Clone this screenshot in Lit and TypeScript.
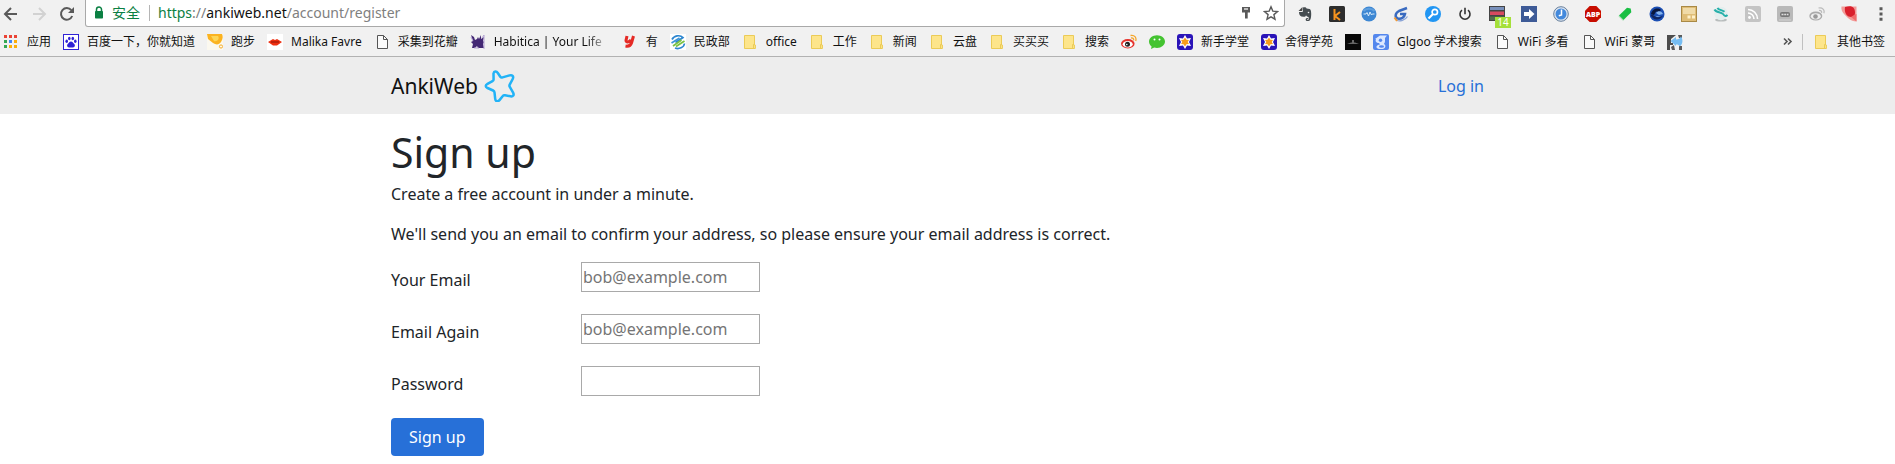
import { LitElement, html, svg, css, nothing, TemplateResult, SVGTemplateResult } from "lit";
import { customElement, property } from "lit/decorators.js";

const icons: Record<string, SVGTemplateResult> = {
  back: svg`<path d="M14 8H2.500M8 2L2 8l6 6" fill="none" stroke="#5a5a5a" stroke-width="2"/>`,
  forward: svg`<path d="M2 8h11.500M8 2l6 6-6 6" fill="none" stroke="#d2d2d2" stroke-width="2"/>`,
  reload: svg`<path d="M13.200 10A5.800 5.800 0 1 1 12.300 4.200" fill="none" stroke="#5a5a5a" stroke-width="2"/><path d="M15 1v6H9z" fill="#5a5a5a"/>`,
  lock: svg`<path d="M5.500 7V4.500a2.500 2.500 0 0 1 5 0V7" fill="none" stroke="#0b8043" stroke-width="1.500"/><rect x="4" y="6" width="8" height="7.500" rx=".8" fill="#0b8043"/>`,
  key: svg`<path d="M4 2h8v5.500H9.700V13.500H7V7.500H4z" fill="#5a5a5a"/><path d="M6 4h4" stroke="#fff" stroke-width="1.200"/>`,
  star: svg`<path d="M8 1.800l1.800 4.300 4.700.4-3.600 3.100 1.100 4.600L8 11.800l-4 2.400 1.100-4.600L1.500 6.500l4.700-.4z" fill="none" stroke="#5a5a5a" stroke-width="1.400"/>`,
  evernote: svg`<path d="M1.500 5L5.500 1v3.200L4.700 5z" fill="#444"/><path d="M2 6h3.500L6 5V1.500c2-.6 3.200 0 3.600.9l3 .6c1.100.3 1.600 2 1.600 4.800 0 4.300-.8 7.200-2.600 7.200H10c-1.400 0-1.800-2-.8-2.800l1.800-.3v1.200h-.9v.7h1.500v-2.900c-1.700-.4-2.300-.8-2.600-1.700-.3 1.300-1 1.700-2.600 1.600C3.200 10.600 2 9 2 6z" fill="#454c50"/><circle cx="11.500" cy="6.500" r=".8" fill="#eee"/>`,
  kindle: svg`<rect width="16" height="16" rx="1.500" fill="#2d2d2d"/><path d="M5.500 3v11M11 6l-5 4 5 4" fill="none" stroke="#f7931e" stroke-width="2"/>`,
  pulse: svg`<circle cx="8" cy="8" r="7.500" fill="#3d87d3"/><path d="M2.500 5a6.500 5 0 0 1 11 0" fill="none" stroke="#5f9fde" stroke-width="2"/><path d="M2.500 8h2.500l1-1.500 1.500 3.500 1.500-4 1.500 3 .8-1h2.200" fill="none" stroke="#d8eafa"/>`,
  gee: svg`<path d="M14 2L6 5C2 7 1.500 11.500 5 12.500c3.500.8 6.500-1.500 7-4.500H7" fill="none" stroke="#3a6bc0" stroke-width="2.500"/><path d="M4 14.500c3 1 8 0 10.500-4" fill="none" stroke="#8aa4d6" stroke-width="1.300"/><path d="M1.500 11.500L4 15" stroke="#f39a34" stroke-width="2"/>`,
  bluekey: svg`<circle cx="8" cy="8" r="8" fill="#2196f3"/><circle cx="9.800" cy="6" r="2.700" fill="none" stroke="#fff" stroke-width="1.700"/><path d="M8 8l-4.500 4.500" stroke="#fff" stroke-width="2.200"/>`,
  power: svg`<path d="M5 4.200a5 5 0 1 0 6 0M8 1.800v6.500" fill="none" stroke="#333" stroke-width="1.600"/>`,
  flag: svg`<path d="M0 0h16v15H0z" fill="#444"/><path d="M1 1h14v3H1z" fill="#7890bb"/><path d="M1 5.500h14V9H1z" fill="#d8495f"/><path d="M1 10.500h14V14H1z" fill="#526d4d"/>`,
  share: svg`<rect width="16" height="16" fill="#3e5b97"/><path d="M3 6h5V3l5.500 5L8 13v-3H3z" fill="#fff"/>`,
  clock: svg`<circle cx="8" cy="8" r="7.300" fill="#dce4ef" stroke="#667f9c"/><circle cx="8" cy="8" r="5.500" fill="#4389dc"/><path d="M8.500 3.500V9L5.800 9.800" fill="none" stroke="#fff" stroke-width="1.500"/>`,
  abp: svg`<path d="M4.700 0h6.600L16 4.700v6.600L11.300 16H4.700L0 11.300V4.700z" fill="#c70d00"/><text x="8" y="10.500" text-anchor="middle" font-family="Open Sans" font-size="7" font-weight="800" fill="#fff">ABP</text>`,
  tag: svg`<path d="M2 9.500L10 1.800l3.700.7.600 3.800L6.500 14z" fill="#19bf43"/><path d="M1.800 9.500L6.500 14l-.2.900-4.700-4.400z" fill="#9bdda9"/>`,
  globe: svg`<circle cx="8" cy="8" r="7.500" fill="#1c4fb4"/><path d="M2 8c1-5 7-7 10-4l-2 2-3-.4L5 9z" fill="#0a173d"/><path d="M7 7c2-3 6-2 7 1l-4 1zM5 12c3-3 6-1 8-2" fill="#86b5ee"/><path d="M1.500 9c2 5 9 7 13 0-3 3-9 3-11-1z" fill="#102560"/>`,
  drawer: svg`<rect x=".5" y=".5" width="15" height="15" fill="#dfbd76" stroke="#a98945"/><path d="M2 2h12v6H2z" fill="#f0dba8"/><rect x="6.500" y="9.500" width="3" height="3" fill="#fff1c9"/><rect x="11" y="9.500" width="3" height="3" fill="#fff1c9"/>`,
  earth: svg`<ellipse cx="8" cy="14" rx="6" ry="1.600" fill="#b9bdbd"/><circle cx="8" cy="7.500" r="6.800" fill="#e4eeee"/><path d="M1.500 3.500C3 7 8 5.500 10 8s3 2.500 4.500 1M4.500 1.800c1 2.500 5 2 7 4" fill="none" stroke="#27b0aa" stroke-width="2"/>`,
  rss: svg`<rect width="16" height="16" rx="2" fill="#c4c4c4"/><circle cx="4.500" cy="11.500" r="1.400" fill="#fff"/><path d="M3 7a6 6 0 0 1 6 6M3 3.500A9.500 9.500 0 0 1 12.500 13" fill="none" stroke="#fff" stroke-width="1.600"/>`,
  chat: svg`<rect width="16" height="16" rx="2" fill="#b9b9b9"/><rect x="3" y="6" width="10" height="5" rx="2" fill="#777"/><path d="M4.500 8.500h7" stroke="#ddd" stroke-width="1.500" stroke-dasharray="2 .7"/><path d="M2 14h12" stroke="#d4d4d4"/>`,
  weibogrey: svg`<ellipse cx="6.800" cy="10" rx="6.500" ry="4.500" fill="#aaa"/><ellipse cx="6.800" cy="10.300" rx="5" ry="3.100" fill="#eee"/><circle cx="6.500" cy="10.500" r="2.300" fill="#999"/><path d="M9.500 2c4-1 6.500 2 5.300 5.300M10 4.500c2-.4 3 .9 2.500 2.400" fill="none" stroke="#bbb" stroke-width="1.200"/>`,
  petal: svg`<path d="M.5.500h15v15C9 15 7 12 3 8 1 6 0 3 .5.500z" fill="#f39b98"/><path d="M4 1c7-2 10 0 10 6 0 3-2 4-4 4-4 0-7-4-6-10z" fill="#d9202c"/><path d="M10 11l5.500 4.500V8L13 9z" fill="#f06c6c"/>`,
  dots: svg`<path d="M6.500 1.200h3v3h-3zM6.500 6.500h3v3h-3zM6.500 11.800h3v3h-3z" fill="#5a5a5a"/>`,
  apps: svg`<path d="M1 1h3v3H1zM6 1h3v3H6zM11 1h3v3h-3z" fill="#ea4335"/><path d="M1 6h3v3H1zM1 11h3v3H1z" fill="#34a853"/><path d="M6 6h3v3H6z" fill="#4285f4"/><path d="M11 6h3v3h-3zM6 11h3v3H6zM11 11h3v3h-3z" fill="#fbae0a"/>`,
  baidu: svg`<rect x=".5" y=".5" width="15" height="15" fill="#fff" stroke="#3023d5"/><path d="M8 7.500c1.500 0 2 1.500 3 2.300 1.500 1.200 1 3.700-1 3.700H6c-2 0-2.500-2.500-1-3.700C6 9 6.500 7.500 8 7.500z" fill="#3023d5"/><g fill="#3023d5"><ellipse cx="3.700" cy="7.200" rx="1.300" ry="1.700"/><ellipse cx="6.300" cy="4.500" rx="1.300" ry="1.800"/><ellipse cx="9.800" cy="4.500" rx="1.300" ry="1.800"/><ellipse cx="12.300" cy="7.200" rx="1.300" ry="1.700"/></g>`,
  run: svg`<rect width="16" height="16" fill="#fbf8ef"/><path d="M0 0h15c1 2 1 5-1 8-2 3-5 3-8 1L1 5z" fill="#fbb321"/><path d="M4 2h7c2 3-1 6-4 5z" fill="#fdd657"/><circle cx="14" cy="12.500" r="1.600" fill="none" stroke="#f8ae28"/>`,
  lips: svg`<rect width="16" height="16" fill="#fff"/><path d="M1 8l5-3 2 1 2-1 5 3-5 3.500H6z" fill="#ee2f11"/><path d="M4 8h8" stroke="#8e170a"/>`,
  file: svg`<path d="M3.500 1.500h6L13.500 5.500v9h-10z" fill="#fafafa" stroke="#555"/><path d="M9.500 1.500v4h4" fill="none" stroke="#555"/>`,
  habitica: svg`<path d="M1 1l3 2 1 3 2-1 1-2 1 2 2-4v4l3-2-1 4 1 1-1 2 1 4H8l-1-2-2 2H2l1-4-2-2 2-1z" fill="#432874"/><path d="M1 3l2 4M12 4l2-3v14M4 14h5" fill="none" stroke="#b4a3d4"/>`,
  you: svg`<path d="M5 2L4 6.500c0 2 3 2 5-.5M11.500 2L9.500 9c-1 3-3 3.500-6 3" fill="none" stroke="#e52a25" stroke-width="3"/>`,
  civil: svg`<rect width="16" height="16" fill="#fff"/><path d="M2 5.500C4 1.500 10 .5 13 3.500L5.500 8.500" fill="none" stroke="#2d86d0" stroke-width="1.700"/><path d="M1.500 9l8-5" fill="none" stroke="#3b94d8" stroke-width="1.700"/><path d="M3 12l8.500-6M14.500 7L6 12.500" fill="none" stroke="#7ac142" stroke-width="1.700"/><path d="M5 14c4 1.500 9-.5 9.500-4.500" fill="none" stroke="#2d86d0" stroke-width="1.700"/>`,
  folder: svg`<path d="M2.500 1.500h10v9.500h.9v3.500H2.500z" fill="#fde58b" stroke="#ebcb57"/><path d="M11.500 14v-3.500h1" fill="none" stroke="#ebcb57"/>`,
  weibo: svg`<ellipse cx="6.800" cy="9.800" rx="6.800" ry="4.700" fill="#e6332d"/><ellipse cx="6.700" cy="10.200" rx="5" ry="3.200" fill="#fff"/><circle cx="6.500" cy="10.300" r="2.500" fill="#222"/><circle cx="5.800" cy="10.500" r=".8" fill="#fff"/><path d="M9.500 1.500c4-.8 6.300 2 5.200 5.500M10 4c2-.3 3 .9 2.500 2.400" fill="none" stroke="#f5a52a" stroke-width="1.300"/>`,
  wechat: svg`<path d="M8 1.200c4.400 0 8 2.800 8 6.300s-3.600 6.400-8 6.400c-1 0-2-.2-2.800-.4L2 15l.6-2.600C1 11.200 0 9.500 0 7.500c0-3.500 3.600-6.300 8-6.300z" fill="#44c331"/><circle cx="5.500" cy="5.500" r="1" fill="#fff"/><circle cx="10.500" cy="5.500" r="1" fill="#fff"/>`,
  anki: svg`<rect width="16" height="16" rx="3" fill="#2a14b8"/><path d="M8 1l2 3.500 4-.5-2 4 2 4-4-.5L8 15l-2-3.500-4 .5 2-4-2-4 4 .5z" fill="#fff"/><path d="M8 3.500l1.500 2.200 2.500.3L10.700 8l1.300 2-2.500.3L8 12.500l-1.500-2.200L4 10l1.300-2L4 6l2.500-.3z" fill="#f79c1c"/>`,
  dark: svg`<rect width="16" height="16" fill="#080808"/><path d="M2 10l4-1.500h1V6h2v2.500h1L14 10z" fill="#666"/>`,
  scholar: svg`<rect width="16" height="16" rx="2" fill="#5487ed"/><path d="M2 5l5-3.500h7L12 4v3c0 2-1 2-1 3 2 1 2 4-1 5H6c-4-1-3-4 1-4.500L6 9C3 9 2 7 3 5z" fill="#dce8ff"/><circle cx="7.500" cy="6.200" r="1.700" fill="#5487ed"/><ellipse cx="8.500" cy="12.500" rx="2.500" ry="1.200" fill="#5487ed"/>`,
  mosaic: svg`<rect y="1" width="15" height="15" fill="#f1f1f1"/><path d="M0 1h9L4 5v4h2v2H3v5H0z" fill="#4c4c4c"/><path d="M4 13l3-2 1 5H5zM11 1h4v3h-3zM12 12h3v4h-3z" fill="#5a5a5a"/><path d="M3.500 7L9 3v2.500c2.500 0 4-1 5-3 2.500 3.500 1.500 8.500-1.500 10-.5-1.500-1.500-2-3.500-2V12z" fill="#76bdf2"/>`,
};

const icon = (name: string): TemplateResult =>
  html`<svg class="icon" width="16" height="16" viewBox="0 0 16 16" aria-hidden="true">${icons[name]}</svg>`;

interface Bookmark {
  icon: string;
  label?: string;
  fade?: boolean;
}

const bookmarks: Bookmark[] = [
  { icon: "apps", label: "应用" },
  { icon: "baidu", label: "百度一下，你就知道" },
  { icon: "run", label: "跑步" },
  { icon: "lips", label: "Malika Favre" },
  { icon: "file", label: "采集到花瓣" },
  { icon: "habitica", label: "Habitica | Your Life", fade: true },
  { icon: "you", label: "有" },
  { icon: "civil", label: "民政部" },
  { icon: "folder", label: "office" },
  { icon: "folder", label: "工作" },
  { icon: "folder", label: "新闻" },
  { icon: "folder", label: "云盘" },
  { icon: "folder", label: "买买买" },
  { icon: "folder", label: "搜索" },
  { icon: "weibo" },
  { icon: "wechat" },
  { icon: "anki", label: "新手学堂" },
  { icon: "anki", label: "舍得学苑" },
  { icon: "dark" },
  { icon: "scholar", label: "Glgoo 学术搜索" },
  { icon: "file", label: "WiFi 多看" },
  { icon: "file", label: "WiFi 蒙哥" },
  { icon: "mosaic" },
];

const extensions = [
  "evernote", "kindle", "pulse", "gee", "bluekey", "power", "flag", "share", "clock",
  "abp", "tag", "globe", "drawer", "earth", "rss", "chat", "weibogrey", "petal", "dots",
];

const reset = css`
  * { box-sizing: border-box; }
  button {
    margin: 0; padding: 0; border: 0; background: none;
    font: inherit; color: inherit; cursor: pointer;
  }
  a { color: inherit; text-decoration: none; }
  .icon { display: block; flex: none; }
`;

@customElement("browser-bar")
export class BrowserBar extends LitElement {
  static styles = [reset, css`
    :host {
      display: block;
      background: #f1f1f1;
      border-bottom: 1px solid #b2b2b2;
      font-family: "Noto Sans", "Noto Sans CJK SC", sans-serif;
      color: #111;
    }
    .toolbar { display: flex; align-items: center; height: 27px; padding-right: 6px; }
    .nav { display: flex; gap: 12px; padding: 0 10px 0 3px; }
    .address {
      flex: 1; min-width: 0; height: 27px;
      display: flex; align-items: center;
      padding: 0 5px;
      background: #fff;
      border: 1px solid #a9a9a9; border-top: 0;
      border-radius: 0 0 3px 3px;
      font-size: 14px; line-height: 20px;
      white-space: nowrap;
    }
    .secure {
      display: flex; align-items: center; gap: 5px;
      color: #0b8043;
      padding-right: 9px; margin-right: 8px;
      border-right: 1px solid #b5b5b5;
      line-height: 16px;
    }
    .url { flex: 1; min-width: 0; overflow: hidden; color: #808080; outline: none; }
    .scheme { color: #0b8043; }
    .host { color: #111; }
    .actions { display: flex; gap: 9px; }
    .extensions { display: flex; gap: 16px; margin-left: 12px; }
    .extension { position: relative; }
    .badge {
      position: absolute; left: 6px; top: 11px;
      width: 16px; height: 11px;
      background: #a5e03a; color: #fff;
      font-size: 10px; line-height: 11px; text-align: center;
    }
    .bookmarks {
      display: flex; align-items: center; height: 29px;
      padding: 1px 10px 0 3px;
      font-size: 12px; line-height: 16px; white-space: nowrap;
    }
    .list { flex: 1; min-width: 0; overflow: hidden; display: flex; gap: 12px; }
    .bookmark { display: flex; align-items: center; gap: 8px; flex: none; }
    .fade {
      min-width: 116px;
      -webkit-mask-image: linear-gradient(to right, #000 80%, transparent);
      mask-image: linear-gradient(to right, #000 80%, transparent);
    }
    .more { width: 12px; height: 16px; margin-right: 8px; }
    .other { border-left: 1px solid #c0c0c0; padding-left: 10px; }
  `];

  private bookmark(b: Bookmark) {
    const label = b.label ? html`<span class=${b.fade ? "fade" : "label"}>${b.label}</span>` : nothing;
    return b.icon === "folder"
      ? html`<button class="bookmark">${icon(b.icon)}${label}</button>`
      : html`<a class="bookmark" href="#" aria-label=${b.label ?? b.icon}>${icon(b.icon)}${label}</a>`;
  }

  render() {
    return html`
      <div class="toolbar">
        <div class="nav">
          <button aria-label="Back">${icon("back")}</button>
          <button aria-label="Forward">${icon("forward")}</button>
          <button aria-label="Reload">${icon("reload")}</button>
        </div>
        <div class="address">
          <span class="secure">${icon("lock")}<span>安全</span></span>
          <div class="url" role="textbox" aria-label="Address" contenteditable="true" spellcheck="false"><span class="scheme">https</span>://<span class="host">ankiweb.net</span>/account/register</div>
          <div class="actions">
            <button aria-label="Saved passwords">${icon("key")}</button>
            <button aria-label="Bookmark this page">${icon("star")}</button>
          </div>
        </div>
        <div class="extensions">
          ${extensions.map((name) => html`<button class="extension" aria-label=${name}>${icon(name)}${name === "flag" ? html`<span class="badge">14</span>` : nothing}</button>`)}
        </div>
      </div>
      <div class="bookmarks">
        <div class="list">${bookmarks.map((b) => this.bookmark(b))}</div>
        <button class="more" aria-label="More bookmarks">
          <svg class="icon" width="12" height="16" viewBox="0 0 12 16" aria-hidden="true"><path d="M2 4.500L5 7.500 2 10.500M6 4.500l3 3-3 3" fill="none" stroke="#555" stroke-width="1.600"/></svg>
        </button>
        <button class="bookmark other">${icon("folder")}<span class="label">其他书签</span></button>
      </div>
    `;
  }
}

@customElement("form-field")
export class FormField extends LitElement {
  @property() label = "";
  @property() type = "text";
  @property() placeholder = "";

  static styles = [reset, css`
    :host { display: block; }
    .row { display: grid; grid-template-columns: 190px 179px; align-items: start; }
    .label { padding-top: 6px; line-height: 24px; }
    .input {
      width: 100%; height: 30px; padding: 1px;
      border: 1px solid #a9a9a9; border-radius: 0; background: #fff;
      font: inherit; line-height: 24px; color: #212529;
    }
    .input::placeholder { color: #757575; opacity: 1; }
  `];

  render() {
    return html`<div class="row">
      <label class="label" for="field">${this.label}</label>
      <input class="input" id="field" type=${this.type} placeholder=${this.placeholder}>
    </div>`;
  }
}

@customElement("app-root")
export class AppRoot extends LitElement {
  static styles = [reset, css`
    :host {
      display: block;
      min-height: 100vh;
      background: #fff;
      font-family: "Noto Sans", sans-serif;
      font-size: 16px; line-height: 24px;
      color: #212529;
    }
    .header { background: #ededed; }
    .container { width: 100%; max-width: 1113px; margin: 0 auto; }
    .bar { display: flex; align-items: center; justify-content: space-between; height: 57px; padding-right: 20px; }
    .brand { display: flex; align-items: center; gap: 6px; font-size: 21px; color: #111; }
    .login { color: #2770d8; }
    .title { margin: 0; padding: 10px 0 2px; font-size: 41px; font-weight: 400; line-height: 56px; }
    .text { margin: 0 0 16px; }
    .form { display: grid; gap: 22px; justify-items: start; }
    .submit {
      height: 38px; padding: 0 18px; border-radius: 4px;
      background: #2770d8; color: #fff;
    }
  `];

  render() {
    return html`
      <browser-bar></browser-bar>
      <header class="header">
        <div class="container bar">
          <a class="brand" href="#">AnkiWeb
            <svg class="logo" width="32" height="32" viewBox="0 0 32 32" aria-hidden="true">
              <path d="M9.500 3.500C10 1 12.500 1 13.800 3l2.500 3.700c.6.900 1.200 1 2.200.7l7-2c2.800-.8 4.500 1 3.200 3.600l-3 5.700c-.4.800-.4 1.400.1 2.200l3.300 5.700c1.300 2.400 0 4.200-2.600 3.700l-5.500-1c-1-.2-1.600 0-2.200.8l-3.300 4c-1.700 2-4 1.500-4.300-1.200l-.7-6.500c-.1-1-.5-1.500-1.400-1.900l-5.600-2.500c-2.400-1.100-2.300-3 0-4.200l5-2.600c.8-.4 1.200-1 1.100-1.900z" fill="none" stroke="#22b3f7" stroke-width="2.500"/>
            </svg>
          </a>
          <a class="login" href="#">Log in</a>
        </div>
      </header>
      <main class="container">
        <h1 class="title">Sign up</h1>
        <p class="text">Create a free account in under a minute.</p>
        <p class="text">We'll send you an email to confirm your address, so please ensure your email address is correct.</p>
        <form class="form" @submit=${(e: Event) => e.preventDefault()}>
          <form-field label="Your Email" type="email" placeholder="bob@example.com"></form-field>
          <form-field label="Email Again" type="email" placeholder="bob@example.com"></form-field>
          <form-field label="Password" type="password"></form-field>
          <button class="submit" type="submit">Sign up</button>
        </form>
      </main>
    `;
  }
}
